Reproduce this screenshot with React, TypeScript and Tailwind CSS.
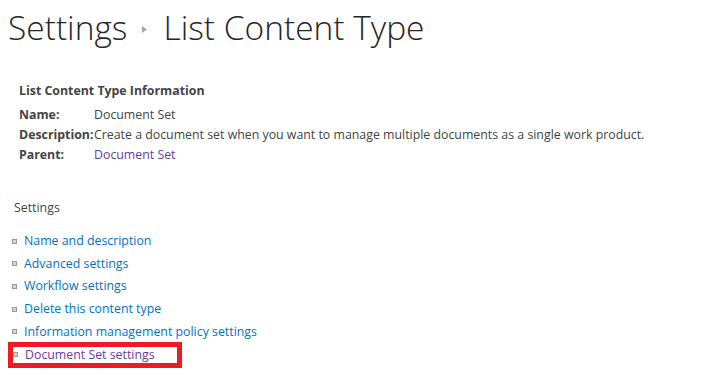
const links = [
  { label: "Name and description" },
  { label: "Advanced settings" },
  { label: "Workflow settings" },
  { label: "Delete this content type" },
  { label: "Information management policy settings" },
  { label: "Document Set settings", visited: true, marked: true },
];

function Bullet() {
  return <span className="block h-[5px] w-[5px] shrink-0 border border-[#9a9a9a] bg-[#d4d4d4]" />;
}

export default function App() {
  return (
    <div className="h-[376px] w-[701px] overflow-hidden bg-white font-['Open_Sans',sans-serif] text-[12.35px] text-[#444]">
      <h1 className="flex items-center pl-[8px] pt-[3px] text-[33.5px] font-light leading-[48px] text-[#262626]">
        <span>Settings</span>
        <svg className="mx-[15px] mt-[4px]" width="6" height="7" viewBox="0 0 6 7">
          <path d="M0 0 L5 3.5 L0 7 Z" fill="#a6a6a6" />
        </svg>
        <span>List Content Type</span>
      </h1>

      <section className="mt-[30px] pl-[19px]">
        <h2 className="font-bold leading-[20px] text-[#444]">List Content Type Information</h2>
        <dl className="mt-[4px] grid grid-cols-[75px_1fr] leading-[20px]">
          <dt className="font-bold">Name:</dt>
          <dd>Document Set</dd>
          <dt className="font-bold">Description:</dt>
          <dd>Create a document set when you want to manage multiple documents as a single work product.</dd>
          <dt className="font-bold">Parent:</dt>
          <dd className="text-[#6b3a9c]">Document Set</dd>
        </dl>
      </section>

      <section className="mt-[33px] pl-[14px]">
        <h3 className="leading-[20px] text-[#444]">Settings</h3>
        <ul className="mt-[12px] flex flex-col">
          {links.map((l) => (
            <li
              key={l.label}
              className={
                l.marked
                  ? "-ml-[6px] -mt-[1px] flex h-[26px] w-[174px] items-center gap-[7px] border-[5px] border-[#ed1c24] pl-0"
                  : "-ml-[2px] flex h-[22.6px] items-center gap-[7px]"
              }
            >
              <Bullet />
              <a className={l.visited ? "leading-[20px] text-[#6b3a9c]" : "leading-[20px] text-[#0072c6]"}>{l.label}</a>
            </li>
          ))}
        </ul>
      </section>
    </div>
  );
}
